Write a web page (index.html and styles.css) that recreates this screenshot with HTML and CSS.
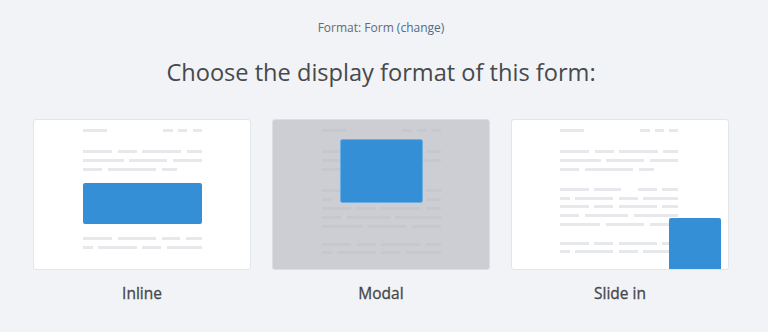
FILE: index.html
```html
<!DOCTYPE html>
<html>
    <head>
        <meta name="viewport" content="width=device-width, initial-scale=1" />
        <meta http-equiv="content-type" content="text/html; charset=utf-8" />
        <title>Form format</title>
        <link rel="stylesheet" href="styles.css">
    </head>
    <body>
        <div class="format">Format: Form <a href="#" class="change">(change)</a></div>
        <h1 class="heading">Choose the display format of this form:</h1>
        <div class="options">
            <!-- inline -->
            <div class="option">
                <div class="preview">
                    <svg width="218" height="150" viewBox="0 0 218 150">
                        <g fill="#e6e8ec">
                            <rect x="50" y="10" width="24" height="3"/>
                            <rect x="130" y="10" width="10" height="3"/>
                            <rect x="145" y="10" width="9" height="3"/>
                            <rect x="160" y="10" width="9" height="3"/>
                            <rect x="50" y="31" width="29" height="3"/>
                            <rect x="85" y="31" width="19" height="3"/>
                            <rect x="109" y="31" width="39" height="3"/>
                            <rect x="154" y="31" width="15" height="3"/>
                            <rect x="50" y="40" width="41" height="3"/>
                            <rect x="96" y="40" width="38" height="3"/>
                            <rect x="140" y="40" width="29" height="3"/>
                            <rect x="50" y="49" width="19" height="3"/>
                            <rect x="75" y="49" width="48" height="3"/>
                            <rect x="129" y="49" width="15" height="3"/>
                            <rect x="50" y="118" width="29" height="3"/>
                            <rect x="85" y="118" width="38" height="3"/>
                            <rect x="129" y="118" width="18" height="3"/>
                            <rect x="153" y="118" width="16" height="3"/>
                            <rect x="50" y="127" width="10" height="3"/>
                            <rect x="65" y="127" width="39" height="3"/>
                            <rect x="109" y="127" width="19" height="3"/>
                            <rect x="134" y="127" width="35" height="3"/>
                        </g>
                        <rect x="50" y="64" width="119" height="41" rx="2" fill="#348fd6"/>
                    </svg>
                </div>
                <div class="label">Inline</div>
            </div>
            <!-- modal -->
            <div class="option">
                <div class="preview dimmed">
                    <svg width="218" height="150" viewBox="0 0 218 150">
                        <g fill="#c7c8cd">
                            <rect x="50" y="10" width="24" height="3"/>
                            <rect x="130" y="10" width="10" height="3"/>
                            <rect x="145" y="10" width="9" height="3"/>
                            <rect x="160" y="10" width="9" height="3"/>
                            <rect x="50" y="31" width="29" height="3"/>
                            <rect x="154" y="31" width="15" height="3"/>
                            <rect x="50" y="40" width="41" height="3"/>
                            <rect x="140" y="40" width="29" height="3"/>
                            <rect x="50" y="49" width="19" height="3"/>
                            <rect x="50" y="70" width="29" height="3"/>
                            <rect x="154" y="70" width="15" height="3"/>
                            <rect x="50" y="79" width="10" height="3"/>
                            <rect x="154" y="79" width="15" height="3"/>
                            <rect x="50" y="88" width="29" height="3"/>
                            <rect x="85" y="88" width="19" height="3"/>
                            <rect x="109" y="88" width="39" height="3"/>
                            <rect x="154" y="88" width="15" height="3"/>
                            <rect x="50" y="97" width="19" height="3"/>
                            <rect x="75" y="97" width="43" height="3"/>
                            <rect x="123" y="97" width="46" height="3"/>
                            <rect x="50" y="106" width="40" height="3"/>
                            <rect x="96" y="106" width="38" height="3"/>
                            <rect x="140" y="106" width="29" height="3"/>
                            <rect x="50" y="124" width="29" height="3"/>
                            <rect x="85" y="124" width="19" height="3"/>
                            <rect x="109" y="124" width="39" height="3"/>
                            <rect x="154" y="124" width="15" height="3"/>
                            <rect x="50" y="132" width="10" height="3"/>
                            <rect x="65" y="132" width="39" height="3"/>
                            <rect x="109" y="132" width="19" height="3"/>
                            <rect x="134" y="132" width="35" height="3"/>
                        </g>
                        <rect x="68.5" y="20.5" width="82" height="63" rx="2" fill="#348fd6" stroke="#6aaee3" stroke-width="1"/>
                    </svg>
                </div>
                <div class="label">Modal</div>
            </div>
            <!-- slide in -->
            <div class="option">
                <div class="preview">
                    <svg width="218" height="150" viewBox="0 0 218 150">
                        <g fill="#e6e8ec">
                            <rect x="49" y="10" width="24" height="3"/>
                            <rect x="129" y="10" width="10" height="3"/>
                            <rect x="144" y="10" width="9" height="3"/>
                            <rect x="158" y="10" width="9" height="3"/>
                            <rect x="49" y="31" width="29" height="3"/>
                            <rect x="84" y="31" width="19" height="3"/>
                            <rect x="108" y="31" width="39" height="3"/>
                            <rect x="152" y="31" width="15" height="3"/>
                            <rect x="49" y="40" width="41" height="3"/>
                            <rect x="95" y="40" width="38" height="3"/>
                            <rect x="139" y="40" width="28" height="3"/>
                            <rect x="49" y="49" width="19" height="3"/>
                            <rect x="74" y="49" width="48" height="3"/>
                            <rect x="128" y="49" width="15" height="3"/>
                            <rect x="49" y="69" width="29" height="3"/>
                            <rect x="83" y="69" width="27" height="3"/>
                            <rect x="127" y="69" width="19" height="3"/>
                            <rect x="151" y="69" width="16" height="3"/>
                            <rect x="49" y="78" width="10" height="3"/>
                            <rect x="64" y="78" width="38" height="3"/>
                            <rect x="108" y="78" width="19" height="3"/>
                            <rect x="132" y="78" width="35" height="3"/>
                            <rect x="49" y="86" width="29" height="3"/>
                            <rect x="83" y="86" width="19" height="3"/>
                            <rect x="108" y="86" width="38" height="3"/>
                            <rect x="151" y="86" width="16" height="3"/>
                            <rect x="49" y="95" width="19" height="3"/>
                            <rect x="74" y="95" width="43" height="3"/>
                            <rect x="123" y="95" width="44" height="3"/>
                            <rect x="49" y="104" width="40" height="3"/>
                            <rect x="95" y="104" width="38" height="3"/>
                            <rect x="139" y="104" width="28" height="3"/>
                            <rect x="49" y="123" width="29" height="3"/>
                            <rect x="83" y="123" width="19" height="3"/>
                            <rect x="108" y="123" width="38" height="3"/>
                            <rect x="151" y="123" width="16" height="3"/>
                            <rect x="49" y="131" width="10" height="3"/>
                            <rect x="64" y="131" width="38" height="3"/>
                            <rect x="108" y="131" width="19" height="3"/>
                            <rect x="132" y="131" width="35" height="3"/>
                        </g>
                        <path d="M158 101a2 2 0 0 1 2-2h48a2 2 0 0 1 2 2v49h-52z" fill="#348fd6"/>
                    </svg>
                </div>
                <div class="label">Slide in</div>
            </div>
        </div>
    </body>
</html>
```

FILE: styles.css
```css
*{
    box-sizing: border-box;
    padding: 0;
    margin: 0;
}
body{
    background: #f1f3f6;
    color: #444;
    font-family: "Open Sans", "Liberation Sans", sans-serif;
    padding: 20px 0 0 33px;
}
.format{
    width: 696px;
    text-align: center;
    font-size: 12px;
    line-height: 16px;
    color: #666a70;
}
.change{
    color: #4f6b88;
    text-decoration: none;
}
.heading{
    width: 696px;
    margin-top: 20px;
    text-align: center;
    font-size: 23.6px;
    font-weight: normal;
    line-height: 32px;
    color: #47494d;
}
.options{
    display: flex;
    gap: 21px;
    margin-top: 31px;
}
.option{
    width: 218px;
}
.preview{
    height: 151px;
    background: #fff;
    border: 1px solid #e2e5ea;
    border-radius: 3px;
    overflow: hidden;
}
.preview svg{
    display: block;
    margin: -1px 0 0 -1px;
}
.dimmed{
    background: #cdced3;
    border-color: #dcdee2;
}
.label{
    margin-top: 13px;
    text-align: center;
    font-size: 15.5px;
    font-weight: 500;
    line-height: 20px;
    color: #45474b;
    -webkit-text-stroke: 0.3px #45474b;
}
```
